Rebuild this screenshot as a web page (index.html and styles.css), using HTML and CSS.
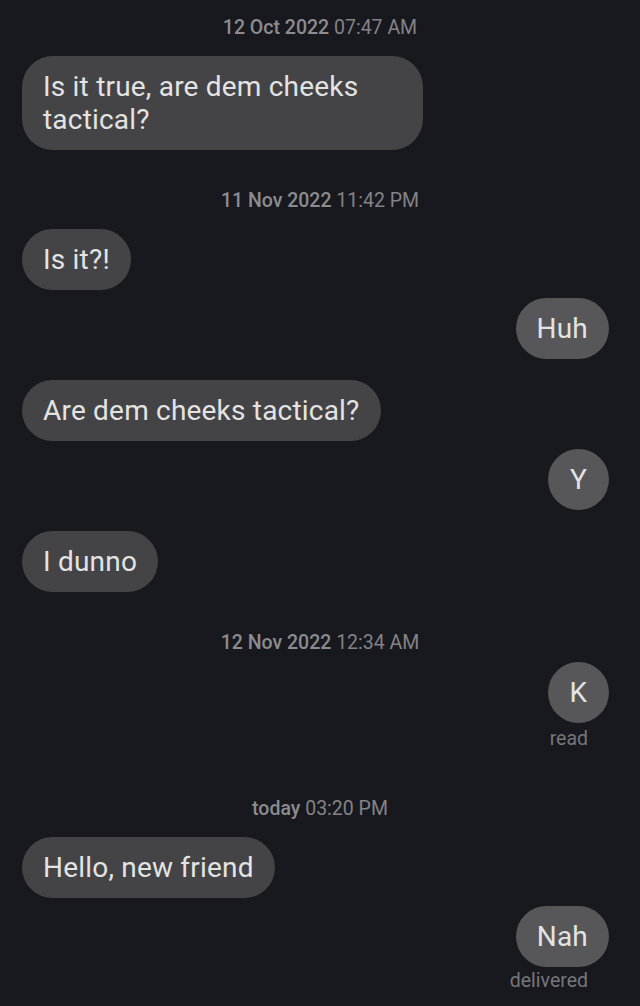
FILE: index.html
```html
<!DOCTYPE html>
<html lang="en">
<head>
    <meta charset="UTF-8">
    <meta name="viewport" content="width=device-width, initial-scale=1.0">
    <title>Chat</title>
    <link rel="stylesheet" href="styles.css">
</head>
<body>
    <div class="thread">
        <div class="stamp first"><b>12 Oct 2022</b> 07:47 AM</div>
        <div class="msg in">Is it true, are dem cheeks tactical?</div>

        <div class="stamp"><b>11 Nov 2022</b> 11:42 PM</div>
        <div class="msg in">Is it?!</div>
        <div class="msg out">Huh</div>
        <div class="msg in">Are dem cheeks tactical?</div>
        <div class="msg out round">Y</div>
        <div class="msg in">I dunno</div>

        <div class="stamp"><b>12 Nov 2022</b> 12:34 AM</div>
        <div class="msg out round">K</div>
        <div class="status">read</div>

        <div class="stamp after-status"><b>today</b> 03:20 PM</div>
        <div class="msg in">Hello, new friend</div>
        <div class="msg out">Nah</div>
        <div class="status last">delivered</div>
    </div>
</body>
</html>
```

FILE: styles.css
```css
body {
    margin: 0;
    background-color: #18191e;
    font-family: Roboto, 'Noto Sans', sans-serif;
    height: 1006px;
    overflow: hidden;
}
.thread {
    display: flex;
    flex-direction: column;
    padding: 0 31px 0 22px;
}
.stamp {
    align-self: center;
    font-size: 19.5px;
    line-height: 20px;
    color: #838387;
    margin-top: 41px;
    margin-bottom: 18px;
    margin-left: 9px; /* page padding is uneven, keep stamps centred on screen */
}
.stamp b {
    font-weight: 500;
    color: #8c8c90;
}
.stamp.first {
    margin-top: 18px;
}
.stamp.after-status {
    margin-top: 50px;
}
.msg {
    max-width: 359px;
    padding: 14px 21px;
    font-size: 28px;
    line-height: 33px;
    letter-spacing: 0.2px;
    color: #e3e3e3;
    border-radius: 31px;
    margin-top: 8px;
}
.stamp + .msg {
    margin-top: 0;
}
.stamp + .msg.out {
    margin-top: -9px;
}
.msg.in {
    align-self: flex-start;
    background-color: #444446;
}
.msg.out {
    align-self: flex-end;
    background-color: #575759;
}
.msg.out + .msg.in {
    margin-top: 21px;
}
.msg.round {
    min-width: 19px;
    text-align: center;
}
.status {
    align-self: flex-end;
    margin-right: 21px;
    margin-top: 6px;
    font-size: 19.5px;
    line-height: 20px;
    color: #76767a;
}
.status.last {
    margin-top: 4px;
}
```
